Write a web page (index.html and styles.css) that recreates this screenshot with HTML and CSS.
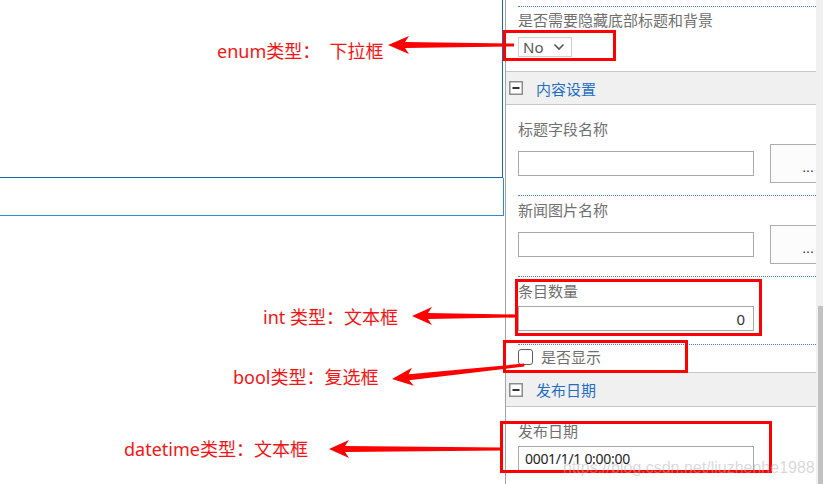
FILE: index.html
```html
<!DOCTYPE html>
<html lang="zh-CN">
  <head>
    <meta charset="UTF-8" />
    <title>属性面板</title>
    <link rel="stylesheet" href="styles.css">
  </head>
  <body>
    <div class="page">
      <div class="canvas">
        <div class="canvas-main"></div>
        <div class="canvas-strip"></div>
      </div>

      <div class="panel">
        <div class="prop prop-cut"></div>
        <div class="prop prop-last prop-top">
          <div class="prop-label">是否需要隐藏底部标题和背景</div>
          <div class="select">
            <span>No</span>
            <svg width="12" height="8" viewBox="0 0 12 8"><path d="M1.5 1.5 L6 6 L10.5 1.5" fill="none" stroke="#555" stroke-width="1.6"/></svg>
          </div>
        </div>

        <div class="section-head">
          <svg class="toggle" width="14" height="14" viewBox="0 0 14 14"><rect x="0.75" y="0.75" width="12.5" height="12.5" fill="#fff" stroke="#8c8c8c" stroke-width="1.5"/><rect x="3.5" y="6" width="7" height="2" fill="#333"/></svg>
          <span>内容设置</span>
        </div>

        <div class="prop prop-first">
          <div class="prop-label">标题字段名称</div>
          <div class="field-row">
            <input class="text-input" type="text" value="">
            <button class="pick-btn">...</button>
          </div>
        </div>
        <div class="prop">
          <div class="prop-label">新闻图片名称</div>
          <div class="field-row">
            <input class="text-input" type="text" value="">
            <button class="pick-btn">...</button>
          </div>
        </div>
        <div class="prop prop-num">
          <div class="prop-label">条目数量</div>
          <input class="text-input num-input" type="text" value="0">
        </div>
        <div class="prop prop-last prop-check">
          <label class="check-row"><input class="check" type="checkbox"><span>是否显示</span></label>
        </div>

        <div class="section-head section-date">
          <svg class="toggle" width="14" height="14" viewBox="0 0 14 14"><rect x="0.75" y="0.75" width="12.5" height="12.5" fill="#fff" stroke="#8c8c8c" stroke-width="1.5"/><rect x="3.5" y="6" width="7" height="2" fill="#333"/></svg>
          <span>发布日期</span>
        </div>

        <div class="prop prop-first prop-last">
          <div class="prop-label">发布日期</div>
          <input class="text-input date-input" type="text" value="0001/1/1 0:00:00">
        </div>
      </div>

      <div class="scrollbar"><div class="thumb"></div></div>
    </div>

    <!-- 标注 -->
    <svg class="marks" width="823" height="484" viewBox="0 0 823 484">
      <g fill="none" stroke="#f00" stroke-width="3">
        <rect x="504.5" y="31.5" width="110" height="28"/>
        <rect x="516.5" y="280.5" width="244" height="54"/>
        <rect x="504.5" y="341.5" width="182" height="30"/>
        <rect x="501.5" y="422.5" width="269" height="49"/>
      </g>
      <g fill="#f00">
        <polygon points="388,45 409,36 405,42 514,43.5 514,46.5 405,48 409,54"/>
        <polygon points="412,316 432,307 428,313 516,314.5 516,317.5 428,319 432,325"/>
        <polygon transform="translate(392,379) rotate(-6)" points="0,0 21,-9 17,-3 133,-1.5 133,1.5 17,3 21,9"/>
        <polygon points="329,449 349,440 345,446 501,447.5 501,450.5 345,452 349,458"/>
      </g>
    </svg>
    <span class="note note-enum">enum类型：  下拉框</span>
    <span class="note note-int">int 类型：文本框</span>
    <span class="note note-bool">bool类型：复选框</span>
    <span class="note note-date">datetime类型：文本框</span>

    <div class="watermark">https://blog.csdn.net/liuzhenhe1988</div>
  </body>
</html>
```

FILE: styles.css
```css
* {
  margin: 0;
  padding: 0;
  box-sizing: border-box;
}
body {
  width: 823px;
  height: 484px;
  overflow: hidden;
  position: relative;
  background: #fff;
  font-family: "Noto Sans", "Noto Sans CJK SC", sans-serif;
}
.page {
  display: flex;
  height: 484px;
}

/* 左边的设计区 */
.canvas {
  width: 505px;
  flex-shrink: 0;
}
.canvas-main {
  width: 503px;
  height: 178px;
  border-right: 1px solid #1a67ab;
  border-bottom: 1px solid #1a67ab;
}
.canvas-strip {
  width: 504px;
  height: 38px;
  border-right: 1px solid #2b8bd9;
  border-bottom: 1px solid #2b8bd9;
}

/* 属性面板 */
.panel {
  width: 311px;
  flex-shrink: 0;
  border-left: 1px solid #a3a3a3;
  overflow: hidden;
}
.prop {
  margin-left: 12px;
  padding: 4px 0 12px;
  border-bottom: 1px dotted #4c7fd6;
}
.prop-cut {
  height: 7px;
  padding: 0;
}
.prop-last {
  border-bottom: none;
}
.prop-top {
  padding: 3px 0 14px;
}
.prop-first {
  padding-top: 14px;
}
.prop-num {
  padding-bottom: 13px;
}
.prop-check {
  height: 27px;
  padding: 4px 0 0;
}
.prop-label {
  font-size: 15px;
  line-height: 20px;
  color: #707070;
}

.select {
  display: flex;
  align-items: center;
  justify-content: space-between;
  width: 54px;
  height: 20px;
  margin-top: 7px;
  padding: 0 6px 0 4px;
  border: 1px solid #d0d0d0;
  font-size: 15px;
  color: #555;
}

.section-head {
  display: flex;
  align-items: center;
  gap: 13px;
  height: 34px;
  padding-left: 3px;
  background: #f0f0f0;
  border-top: 1px solid #c6c6c6;
  border-bottom: 1px solid #c6c6c6;
  font-size: 15px;
  color: #1f6fc6;
}
.section-date {
  height: 35px;
}
.toggle {
  display: block;
}

.field-row {
  display: flex;
  align-items: center;
  margin-top: 5px;
}
.text-input {
  display: block;
  width: 236px;
  height: 25px;
  border: 1px solid #a8a8a8;
  padding: 0 6px;
  font-family: "Noto Sans", "Noto Sans CJK SC", sans-serif;
  font-size: 15px;
  color: #222;
  outline: none;
}
.prop-num .text-input,
.date-input {
  margin-top: 5px;
}
.num-input {
  text-align: right;
  padding-right: 8px;
  color: #333;
}
.date-input {
  font-size: 14px;
  letter-spacing: -0.3px;
}
.pick-btn {
  flex-shrink: 0;
  width: 84px;
  height: 39px;
  margin-left: 16px;
  padding: 6px 8px 0 0;
  border: 1px solid #adadad;
  background: #fcfcfc;
  font-size: 14px;
  color: #333;
}

.check-row {
  display: flex;
  align-items: center;
  gap: 8px;
  font-size: 15px;
  line-height: 16px;
  color: #707070;
}
.check {
  appearance: none;
  width: 15px;
  height: 16px;
  border: 1px solid #5c5c5c;
  border-radius: 3px;
  background: #fff;
}

.scrollbar {
  width: 7px;
  flex-shrink: 0;
  background: #f0f0f0;
}
.thumb {
  width: 5px;
  height: 178px;
  margin: 306px 0 0 2px;
  background: #c1c1c1;
}

/* 红色标注 */
.marks {
  position: absolute;
  left: 0;
  top: 0;
  pointer-events: none;
}
.note {
  position: absolute;
  font-size: 18px;
  line-height: 20px;
  color: #f41414;
  white-space: pre;
}
.note-enum {
  left: 217px;
  top: 41px;
}
.note-int {
  left: 263px;
  top: 307px;
}
.note-bool {
  left: 233px;
  top: 367px;
}
.note-date {
  left: 124px;
  top: 439px;
}

.watermark {
  position: absolute;
  left: 563px;
  top: 459px;
  font-family: "Liberation Sans", sans-serif;
  font-size: 16px;
  line-height: 18px;
  color: rgba(180, 180, 180, 0.5);
}
```
